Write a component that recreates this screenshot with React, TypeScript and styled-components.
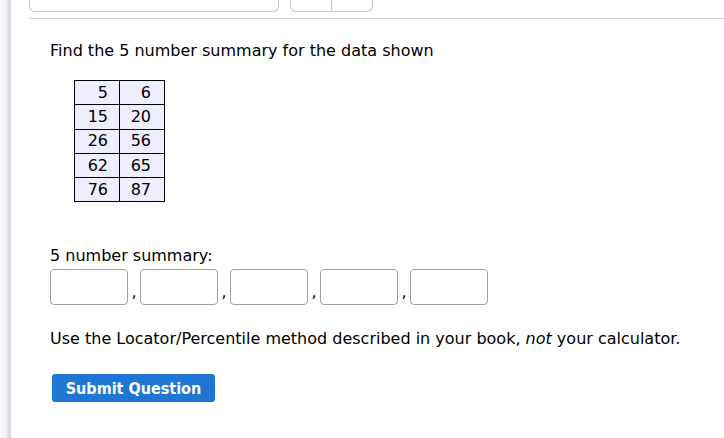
import React from 'react';
import styled, { createGlobalStyle } from 'styled-components';

const GlobalStyle = createGlobalStyle`
  html, body {
    margin: 0;
    padding: 0;
    background: #fff;
  }
  body {
    font-family: "DejaVu Sans", "Liberation Sans", sans-serif;
    font-size: 16px;
    color: #000;
  }
`;

const Page = styled.div`
  display: flex;
  min-height: 438px;
`;

const SideStrip = styled.div`
  width: 11px;
  flex-shrink: 0;
  background: linear-gradient(to right, #f7f8fd 0%, #eef0fa 55%, #d3d3dc 85%, #e4e4ea 100%);
`;

const Main = styled.div`
  flex: 1;
  padding-left: 18px;
`;

const TopBar = styled.div`
  display: flex;
  gap: 11px;
  height: 12px;
  padding-bottom: 6px;
  border-bottom: 1px solid #cfcfcf;
`;

const TopBox = styled.div<{ $width: number }>`
  width: ${p => p.$width}px;
  height: 12px;
  box-sizing: border-box;
  border: 1px solid #c8c8c8;
  border-top: none;
  border-radius: 0 0 6px 6px;
  display: flex;
`;

const TopBoxPart = styled.div`
  flex: 1;
  & + & {
    border-left: 1px solid #c8c8c8;
  }
`;

const Question = styled.div`
  padding: 22px 0 0 21px;
`;

const Prompt = styled.p`
  margin: 0;
  line-height: 20px;
`;

const DataTable = styled.table`
  border-collapse: collapse;
  margin: 19px 0 0 24px;
  border: 1px solid #000;
`;

const Cell = styled.td`
  width: 33px;
  height: 23.3px;
  padding: 0 11px 0 0;
  border: 1px solid #000;
  background: #eeeeff;
  text-align: right;
  line-height: 20px;
  &:last-child {
    width: 31px;
    padding-right: 13px;
  }
`;

const SummaryLabel = styled.p`
  margin: 44px 0 0 0;
  line-height: 20px;
`;

const AnswerRow = styled.div`
  display: flex;
  align-items: flex-end;
  margin-top: 3px;
`;

const AnswerBox = styled.input`
  width: 78px;
  height: 36px;
  box-sizing: border-box;
  margin: 0;
  border: 1px solid #a0a0a0;
  border-radius: 4px;
  background: #fff;
  font: inherit;
`;

const Comma = styled.span`
  width: 12px;
  text-align: center;
  line-height: 20px;
  padding-bottom: 3px;
`;

const Note = styled.p`
  margin: 24px 0 0 0;
  line-height: 20px;
`;

const SubmitButton = styled.button`
  margin: 25px 0 0 2px;
  width: 163px;
  height: 28px;
  padding: 0;
  border: none;
  border-radius: 3px;
  background: #1e77d3;
  color: #fff;
  font-family: "DejaVu Sans Condensed", "DejaVu Sans", sans-serif;
  font-size: 16px;
  font-weight: bold;
  cursor: pointer;
`;

const rows: [number, number][] = [
  [5, 6],
  [15, 20],
  [26, 56],
  [62, 65],
  [76, 87],
];

export default function App() {
  return (
    <>
      <GlobalStyle />
      <Page>
        <SideStrip />
        <Main>
          <TopBar>
            <TopBox $width={250} />
            <TopBox $width={83}>
              <TopBoxPart />
              <TopBoxPart />
            </TopBox>
          </TopBar>
          <Question>
            <Prompt>Find the 5 number summary for the data shown</Prompt>
            <DataTable>
              <tbody>
                {rows.map(([a, b]) => (
                  <tr key={a}>
                    <Cell>{a}</Cell>
                    <Cell>{b}</Cell>
                  </tr>
                ))}
              </tbody>
            </DataTable>
            <SummaryLabel>5 number summary:</SummaryLabel>
            <AnswerRow>
              {[0, 1, 2, 3, 4].map(i => (
                <React.Fragment key={i}>
                  {i > 0 && <Comma>,</Comma>}
                  <AnswerBox type="text" aria-label={`summary value ${i + 1}`} />
                </React.Fragment>
              ))}
            </AnswerRow>
            <Note>
              Use the Locator/Percentile method described in your book, <em>not</em> your calculator.
            </Note>
            <SubmitButton type="button">Submit Question</SubmitButton>
          </Question>
        </Main>
      </Page>
    </>
  );
}
